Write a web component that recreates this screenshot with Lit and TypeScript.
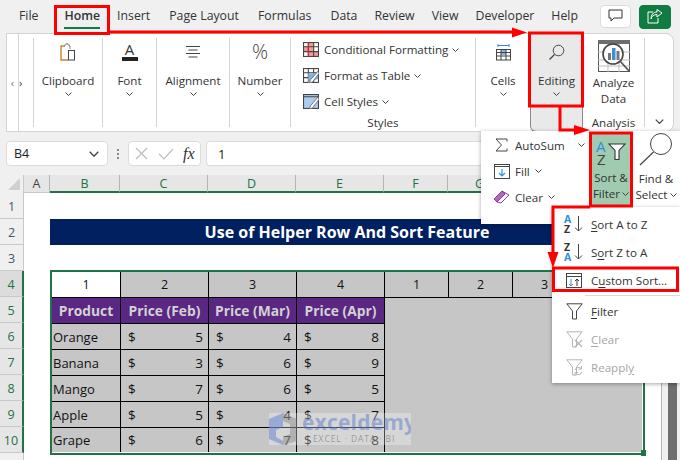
import { LitElement, html, css, svg } from "lit";
import { customElement } from "lit/decorators.js";

const chev = (w = 7, h = 4, c = "#444") => html`<svg class="chev" width=${w} height=${h} viewBox="0 0 7 4"><path d="M.5.5 3.5 3.5 6.5.5" fill="none" stroke=${c} stroke-width="1"/></svg>`;

const grid = (x: number, y: number) => svg`<g fill="none" stroke="#444" stroke-width="1"><rect x=${x + .5} y=${y + .5} width="14" height="13"/><path d="M${x + 5} ${y}v14M${x + 10} ${y}v14M${x} ${y + 4.5}h15M${x} ${y + 9}h15"/></g>`;

const icons = {
  clipboard: html`<svg width="16" height="18" viewBox="0 0 16 18"><path d="M5 3H1v14h7" fill="none" stroke="#d67f28" stroke-width="1.4"/><path d="M4.5 3.5V2h1.5V.7h2V2h1.5v1.5M10 3v3" fill="none" stroke="#8a8a8a"/><rect x="8.5" y="7.5" width="6" height="9.5" fill="#fff" stroke="#444"/></svg>`,
  align: html`<svg width="16" height="14" viewBox="0 0 16 14"><path d="M1 1.5h14M3.5 5h9M1 8.500h14M3.500 12h9" stroke="#444" fill="none"/></svg>`,
  cond: html`<svg width="16" height="15" viewBox="0 0 15 14"><rect x="5" y="0" width="5" height="9" fill="#f29b9b"/><rect x="5" y="9" width="10" height="5" fill="#f29b9b"/><rect x="0" y="4" width="5" height="5" fill="#f29b9b"/>${grid(0, 0)}<path d="M5 .5v13" stroke="#d22" /></svg>`,
  table: html`<svg width="16" height="15" viewBox="0 0 15 14">${grid(0, 0)}<path d="M5 5h9v5L6 14H5z" fill="#7fb2e5"/><path d="M14 3 7 11l-1 3 3-1 6-8z" fill="#fff" stroke="#666" stroke-width=".8"/></svg>`,
  styles: html`<svg width="16" height="15" viewBox="0 0 15 14"><rect x=".5" y=".5" width="14" height="13" fill="#a9cdf0"/><path d="M0 .5h15M0 2.500h15" stroke="#444"/><rect x=".5" y=".5" width="14" height="13" fill="none" stroke="#444"/><path d="M14 3 7 11l-1 3 3-1 6-8z" fill="#fff" stroke="#666" stroke-width=".8"/></svg>`,
  cells: html`<svg width="17" height="18" viewBox="0 0 17 18"><path d="M3 1v3M14 1v3M3 2.500h11" stroke="#2f8fdc" fill="none"/><rect x="6" y="6" width="5" height="6" fill="#7fb2e5"/><rect x="1.500" y="6.500" width="14" height="10.500" fill="none" stroke="#444"/><path d="M6 6v11M11 6v11M1 9.500h15M1 13h15" stroke="#444" fill="none"/></svg>`,
  search: html`<svg width="17" height="17" viewBox="0 0 17 17"><circle cx="10.500" cy="6.500" r="5.300" fill="none" stroke="#444"/><path d="M6.500 10.500 1.500 15.500" stroke="#444" stroke-width="1.300"/></svg>`,
  analyze: html`<svg width="32" height="33" viewBox="0 0 32 33"><rect x=".5" y=".5" width="31" height="31" fill="#fff" stroke="#555"/><rect x="0" y="0" width="32" height="4" fill="#6d6d6d"/><path d="M0 12h32M0 20h32M0 26h32M10 4v28M21 4v28" stroke="#bdbdbd"/><circle cx="15" cy="14" r="10" fill="#fff" stroke="#444" stroke-width="1.600"/><rect x="10" y="13" width="3" height="7" fill="#777"/><rect x="14" y="8" width="3.500" height="12" fill="#3f8ed6"/><rect x="18.500" y="11" width="3" height="9" fill="#777"/><path d="M22 21 31 31" stroke="#555" stroke-width="1.800"/></svg>`,
  sum: html`<svg width="13" height="14" viewBox="0 0 13 14"><path d="M12 3.500V1H1l5.500 6L1 13h11v-2.500" fill="none" stroke="#444"/></svg>`,
  fill: html`<svg width="16" height="15" viewBox="0 0 16 15"><rect x=".5" y=".5" width="15" height="14" fill="#fff" stroke="#444"/><path d="M0 2.500h16" stroke="#444"/><path d="M8 5v7M5 9l3 3 3-3" fill="none" stroke="#2f8fdc" stroke-width="1.200"/></svg>`,
  clear: html`<svg width="17" height="15" viewBox="0 0 17 15"><path d="M1 9 9 1l3 3-8 8z" fill="#b267c4" stroke="#8d3ea3"/><path d="M9 1l7 4-8 8-4-1 8-8z" fill="#fff" stroke="#8d3ea3"/></svg>`,
  az: html`<svg class="ovf" width="30" height="27" viewBox="0 0 30 27"><text x="0" y="12" class="sa">A</text><text x="1" y="25" class="sz">Z</text><path d="M13 4h16l-6 6.500v9h-4v-9z" fill="#fff" stroke="#333" stroke-width="1.100"/></svg>`,
  find: html`<svg width="36" height="36" viewBox="0 0 36 36"><circle cx="23" cy="12" r="10.500" fill="#fff" stroke="#444"/><path d="M15.500 20 2 33" stroke="#444" stroke-width="1.200"/></svg>`,
  sortaz: html`<svg class="ovf" width="20" height="20" viewBox="0 0 20 20"><text x="0" y="9" class="sma">A</text><text x="0" y="19" class="smz">Z</text><path d="M14.500 2v15M11 13.500l3.500 3.500 3.500-3.500" fill="none" stroke="#444"/></svg>`,
  sortza: html`<svg class="ovf" width="20" height="20" viewBox="0 0 20 20"><text x="0" y="9" class="smz">Z</text><text x="0" y="19" class="sma">A</text><path d="M14.500 2v15M11 13.500l3.500 3.500 3.500-3.500" fill="none" stroke="#444"/></svg>`,
  custom: html`<svg width="16" height="15" viewBox="0 0 16 15"><rect x=".5" y=".5" width="15" height="14" fill="#fff" stroke="#444"/><path d="M0 3.500h16" stroke="#444"/><path d="M5 6v7M3 11l2 2 2-2" fill="none" stroke="#2f8fdc"/><path d="M11 13V6M9 8l2-2 2 2" fill="none" stroke="#333"/></svg>`,
  filter: html`<svg width="17" height="17" viewBox="0 0 17 17"><path d="M.8.800h15.400L10.500 8v8h-4V8z" fill="#fff" stroke="#444"/></svg>`,
  fclear: html`<svg width="17" height="17" viewBox="0 0 17 17"><path d="M.8.800h15.400L10.500 8v8h-4V8z" fill="#fff" stroke="#b5b5b5"/><path d="M9 9l7 7M16 9l-7 7" stroke="#b5b5b5" stroke-width="1.300"/></svg>`,
  freapply: html`<svg width="17" height="17" viewBox="0 0 17 17"><path d="M.8.800h15.400L10.500 8v8h-4V8z" fill="#fff" stroke="#b5b5b5"/><path d="M9 11a3.500 3.500 0 0 1 6-1.500M16 13a3.500 3.500 0 0 1-6 1.500M15.500 7v3h-3M9 16.500v-3h3" fill="none" stroke="#b5b5b5"/></svg>`,
  comment: html`<svg width="15" height="14" viewBox="0 0 15 14"><path d="M1 1h13v8H6l-3 3V9H1z" fill="none" stroke="#333"/></svg>`,
  share: html`<svg width="16" height="15" viewBox="0 0 16 15"><path d="M6 3H1v11h10V9" fill="none" stroke="#fff"/><path d="M4 10c.5-3 3-4.500 6-4.500V8l5-4-5-3.500V3C6 3 4 6 4 10z" fill="#107c41" stroke="#fff"/></svg>`,
  x: html`<svg width="13" height="13" viewBox="0 0 13 13"><path d="M1 1l11 11M12 1 1 12" stroke="#bdbdbd" stroke-width="1.200"/></svg>`,
  check: html`<svg width="16" height="12" viewBox="0 0 16 12"><path d="M1 6l5 5L15 1" fill="none" stroke="#bdbdbd" stroke-width="1.200"/></svg>`,
};

const rowsData = [
  ["Orange", 5, 4, 8],
  ["Banana", 3, 6, 9],
  ["Mango", 7, 6, 5],
  ["Apple", 5, 4, 7],
  ["Grape", 6, 7, 8],
];

@customElement("app-root")
export class AppRoot extends LitElement {
  static styles = css`
    :host { display: block; width: 680px; height: 460px; position: relative; overflow: hidden; background: #f0f0f0; font-family: "Open Sans", "Noto Sans", sans-serif; font-size: 11.6px; color: #333; }
    svg { display: block; flex: none; }
    svg.ovf { overflow: visible; }
    .tabs { height: 33px; display: flex; align-items: center; padding-left: 19px; gap: 19px; font-size: 12.3px; position: relative; }
    .tab { padding-bottom: 2px; }
    .tab.tight { margin-left: -2px; }
    .tab.on { font-weight: 600; position: relative; color: #333; margin-left: 7px; margin-right: -2px; }
    .tab.on::after { content: ""; position: absolute; left: 0; right: 0; bottom: -3px; height: 2px; background: #107c41; }
    .tbtns { margin-left: auto; display: flex; gap: 8px; padding-right: 9px; }
    .tbtn { width: 31px; height: 23px; border-radius: 4px; background: #fff; border: 1px solid #dcdcdc; box-sizing: border-box; display: flex; align-items: center; justify-content: center; }
    .tbtn.g { background: #107c41; border-color: #107c41; width: 32px; height: 24px; }
    .ribbon { margin: 0 6px; height: 99px; box-sizing: border-box; background: #fff; border: 1px solid #d2d2d2; border-radius: 0 8px 8px 0; display: flex; padding-top: 4px; }
    .grp { height: 89px; box-sizing: border-box; border-right: 1px solid #d4d4d4; display: flex; flex-direction: column; align-items: center; flex: none; }
    .grp > * { flex: none; }
    .nav1 { width: 12px; height: 97px; margin-top: -4px; border-right: 1px solid #d4d4d4; justify-content: center; align-items: flex-end; padding-right: 4px; }
    .nav2 { width: 15px; height: 89px; justify-content: center; align-items: flex-start; }
    .nv { font-size: 11px; color: #777; line-height: 12px; }
    .nv2 { font-size: 11px; color: #333; line-height: 12px; margin-top: 1px; }
    .ico { height: 28px; display: flex; align-items: center; justify-content: center; }
    .lb { margin-top: 7px; line-height: 16px; white-space: nowrap; }
    .cv { margin-top: 3px; }
    .w-clip { width: 69px; } .w-font { width: 54px; } .w-align { width: 73px; } .w-num { width: 61px; }
    .w-styles { width: 185px; align-items: flex-start; padding-left: 12px; }
    .w-cells { width: 54px; border: 0; }
    .bigA { font-size: 15px; line-height: 13px; color: #333; text-align: center; width: 16px; }
    .bar { width: 16px; height: 4px; background: #222; margin-top: 1px; }
    .stack { display: flex; flex-direction: column; align-items: center; }
    .pct { font-size: 20px; font-weight: 300; color: #444; line-height: 24px; }
    .srow { height: 26px; display: flex; align-items: center; gap: 5px; white-space: nowrap; }
    .srow .chev { margin-left: -1px; margin-top: 2px; }
    .srow:first-child { margin-top: -2px; }
    .slabel { align-self: center; margin-left: -12px; margin-top: 1px; line-height: 16px; }
    .w-edit { width: 53px; height: 98px; margin-top: -4px; padding-top: 4px; background: #e9e9e9; border: 1px solid #8a8a8a; border-top: 0; border-radius: 0 0 6px 6px; }
    .w-an { width: 62px; }
    .an-ic { margin-top: 2px; }
    .an-t { text-align: center; line-height: 16px; margin-top: 2px; }
    .an-l { margin-top: 8px; line-height: 16px; white-space: nowrap; }
    .collapse { flex: 1; display: flex; justify-content: center; padding-top: 81px; }
    .fbar { height: 25px; margin-top: 9px; display: flex; padding-left: 6px; }
    .fb { background: #fff; border: 1px solid #dcdcdc; border-radius: 4px; box-sizing: border-box; display: flex; align-items: center; height: 25px; }
    .name { width: 102px; padding: 0 8px 0 7px; justify-content: space-between; font-size: 12.5px; color: #222; }
    .dots { width: 20px; display: flex; flex-direction: column; align-items: center; justify-content: center; gap: 2px; }
    .dots i { width: 2px; height: 2px; background: #8a8a8a; display: block; }
    .fxb { width: 73px; padding: 0 5px 0 6px; gap: 10px; margin-right: 5px; }
    .fx { font-family: "Liberation Serif", serif; font-style: italic; font-size: 16px; margin-left: -1px; color: #333; }
    .fv { flex: 1; padding-left: 11px; border-right: 0; border-radius: 4px 0 0 4px; font-size: 13px; color: #222; }
    .sheet { margin-top: 9px; height: 285px; display: flex; }
    .main { width: 661px; flex: none; }
    .cols { height: 18px; display: flex; background: #e6e6e6; font-size: 12.5px; }
    .ch { box-sizing: border-box; display: flex; align-items: center; justify-content: center; border-right: 1px solid #b4b4b4; color: #217346; border-bottom: 2px solid #217346; }
    .corner { width: 24px; background: #f0f0f0; display: flex; align-items: flex-end; justify-content: flex-end; padding: 0 3px 3px 0; box-sizing: border-box; border-right: 1px solid #c8c8c8; }
    .ch.a { width: 26px; color: #444; border-bottom: 1px solid #c8c8c8; }
    .c70 { width: 70px; } .c88 { width: 88px; } .c64 { width: 64px; } .c21 { width: 5px; } .cr { flex: 1; border: 0; background: #e6e6e6; border-bottom: 1px solid #c8c8c8; }
    .body { display: flex; height: 267px; }
    .rowh { width: 24px; flex: none; display: flex; flex-direction: column; font-size: 12.5px; }
    .rh { height: 26px; flex: none; box-sizing: border-box; display: flex; align-items: center; justify-content: center; border-bottom: 1px solid #c8c8c8; color: #44546a; background: #f0f0f0; border-right: 1px solid #c8c8c8; padding-top: 2px; }
    .rh.on { background: #e6e6e6; color: #217346; border-right: 2px solid #217346; }
    .rh.tall { background: #dcdcdc; }
    .rh.rest { flex: 1; border: 0; border-right: 1px solid #c8c8c8; }
    .cv2 { flex: 1; background: #fff; min-width: 0; }
    .sp { height: 26px; }
    .sp3 { height: 25px; }
    .title { height: 26px; margin-left: 26px; width: 594px; background: #002060; color: #fff; font-weight: 700; font-size: 16px; display: flex; align-items: center; justify-content: center; }
    .sel { margin-left: 26px; width: 595px; height: 185px; box-sizing: border-box; border: 2px solid #217346; background: #fff; padding: 0 1px 1px 0; position: relative; }
    .tbl { display: grid; grid-template-columns: 69px 88px 88px 88px 64px 64px 64px 1fr; grid-template-rows: repeat(6, 26px) 24px; background: #c6c6c6; font-size: 13px; color: #111; }
    .c { box-sizing: border-box; border-right: 1px solid #000; border-bottom: 1px solid #000; display: flex; align-items: center; background: #c6c6c6; padding: 0 3px 0 1px; white-space: nowrap; }
    .c.h4 { justify-content: center; font-size: 12.5px; padding: 0; }
    .c.h4.w { background: #fff; }
    .c.p { background: #5a2782; color: #d2d2d2; font-weight: 700; justify-content: center; font-size: 13.8px; padding: 0; }
    .c.m { justify-content: space-between; padding: 0 5px 0 7px; font-size: 13.5px; }
    .c.last { border-bottom: 0; }
    .c.end { border-right: 0; }
    .fill { grid-column: 5 / -1; grid-row: 2 / -1; background: #c6c6c6; }
    .handle { position: absolute; right: -3px; bottom: -3px; width: 5px; height: 6px; background: #217346; }
    .sb { flex: 1; border-left: 1px solid #b4b4b4; padding-left: 6px; background: #f0f0f0; }
    .sb i { display: block; width: 9px; height: 100%; background: #6e6e6e; }
    .wm { position: absolute; left: 269px; top: 413px; width: 142px; height: 32px; background: rgba(255,255,255,.28); pointer-events: none; overflow: hidden; z-index: 2; }
    .wm svg { position: absolute; left: 0; top: 0; }
    .wm b { position: absolute; left: 33px; top: -5px; font-size: 21px; line-height: 28px; color: rgba(72,112,200,.45); letter-spacing: .2px; }
    .wm span { position: absolute; left: 44px; top: 20px; font-size: 8.5px; line-height: 11px; letter-spacing: .9px; color: rgba(100,100,100,.55); white-space: nowrap; }
    .menu { position: absolute; background: #fff; box-shadow: 0 1px 4px rgba(0,0,0,.35); z-index: 3; }
    .m1 { left: 481px; top: 131px; width: 199px; height: 93px; display: flex; }
    .m1l { width: 109px; padding-top: 1px; }
    .mr { height: 26px; display: flex; align-items: center; padding-left: 12px; gap: 5px; white-space: nowrap; color: #333; }
    .mr .ibox { width: 17px; display: flex; justify-content: center; }
    .mr .auto { margin-left: 8px; }
    .bigb { display: flex; flex-direction: column; align-items: center; line-height: 16px; text-align: center; }
    .sf { width: 42px; height: 73px; margin-top: 2px; background: #a0cbb0; padding-top: 7px; box-sizing: border-box; }
    .sf .t { margin-top: 3px; }
    .t span { display: inline-flex; align-items: center; gap: 2px; }
    .fs { width: 48px; padding-top: 1px; }
    .fs .t { margin-top: 3px; }
    .m2 { left: 552px; top: 207px; width: 128px; height: 176px; padding-top: 3px; box-sizing: border-box; z-index: 4; }
    .mi { height: 28px; display: flex; align-items: center; padding-left: 13px; gap: 8px; white-space: nowrap; color: #333; }
    .mi .ibox { width: 18px; display: flex; justify-content: center; }
    .mi.dis { color: #a6a6a6; }
    .mi u { text-underline-offset: 2px; }
    .msep { height: 1px; background: #d8d8d8; margin: 1px 0 1px 33px; }
    .ann { position: absolute; left: 0; top: 0; z-index: 5; pointer-events: none; }
    .sa { font: 15px "Open Sans", sans-serif; fill: #2f8fdc; }
    .sz { font: 15px "Open Sans", sans-serif; fill: #444; }
    .sma { font: 700 10.5px "Open Sans", sans-serif; fill: #2f8fdc; }
    .smz { font: 700 10.5px "Open Sans", sans-serif; fill: #333; }
  `;

  private bigGroup(cls: string, icon: unknown, label: string) {
    return html`<div class="grp ${cls}"><div class="ico">${icon}</div><div class="lb">${label}</div><div class="cv">${chev()}</div></div>`;
  }

  render() {
    return html`
      <div class="tabs">
        <span class="tab">File</span><span class="tab on">Home</span><span class="tab">Insert</span><span class="tab">Page Layout</span><span class="tab">Formulas</span><span class="tab">Data</span><span class="tab tight">Review</span><span class="tab tight">View</span><span class="tab tight">Developer</span><span class="tab tight">Help</span>
        <div class="tbtns"><div class="tbtn">${icons.comment}</div><div class="tbtn g">${icons.share}</div></div>
      </div>
      <div class="ribbon">
        <div class="grp nav1"><span class="nv">‹</span></div>
        <div class="grp nav2"><span class="nv2">›</span></div>
        ${this.bigGroup("w-clip", icons.clipboard, "Clipboard")}
        ${this.bigGroup("w-font", html`<div class="stack"><div class="bigA">A</div><div class="bar"></div></div>`, "Font")}
        ${this.bigGroup("w-align", icons.align, "Alignment")}
        ${this.bigGroup("w-num", html`<div class="pct">%</div>`, "Number")}
        <div class="grp w-styles">
          <div class="srow">${icons.cond}<span>Conditional Formatting</span>${chev()}</div>
          <div class="srow">${icons.table}<span>Format as Table</span>${chev()}</div>
          <div class="srow">${icons.styles}<span>Cell Styles</span>${chev()}</div>
          <div class="slabel">Styles</div>
        </div>
        ${this.bigGroup("w-cells", icons.cells, "Cells")}
        ${this.bigGroup("w-edit", icons.search, "Editing")}
        <div class="grp w-an">
          <div class="an-ic">${icons.analyze}</div>
          <div class="an-t">Analyze<br />Data</div>
          <div class="an-l">Analysis</div>
        </div>
        <div class="collapse">${chev(9, 5)}</div>
      </div>
      <div class="fbar">
        <div class="fb name"><span>B4</span>${chev(10, 6)}</div>
        <div class="dots"><i></i><i></i><i></i></div>
        <div class="fb fxb">${icons.x}${icons.check}<span class="fx">fx</span></div>
        <div class="fb fv">1</div>
      </div>
      <div class="sheet">
        <div class="main">
          <div class="cols">
            <div class="corner"><svg width="12" height="12" viewBox="0 0 12 12"><path d="M12 0V12H0z" fill="#cfcfcf"/></svg></div>
            <div class="ch a">A</div>
            <div class="ch c70">B</div><div class="ch c88">C</div><div class="ch c88">D</div><div class="ch c88">E</div>
            <div class="ch c64">F</div><div class="ch c64">G</div><div class="ch c64">H</div><div class="ch c64">I</div><div class="ch c21"></div><div class="cr"></div>
          </div>
          <div class="body">
            <div class="rowh">
              ${[1, 2, 3].map((n) => html`<div class="rh">${n}</div>`)}
              ${[4, 5, 6, 7, 8, 9, 10].map((n) => html`<div class="rh on ${n === 4 ? "tall" : ""}">${n}</div>`)}
              <div class="rh rest"></div>
            </div>
            <div class="cv2">
              <div class="sp"></div>
              <div class="title">Use of Helper Row And Sort Feature</div>
              <div class="sp3"></div>
              <div class="sel">
                <div class="tbl">
                  <div class="c h4 w">1</div><div class="c h4">2</div><div class="c h4">3</div><div class="c h4">4</div><div class="c h4">1</div><div class="c h4">2</div><div class="c h4">3</div><div class="c h4 end">4</div>
                  <div class="c p">Product</div><div class="c p">Price (Feb)</div><div class="c p">Price (Mar)</div><div class="c p">Price (Apr)</div>
                  <div class="fill"></div>
                  ${rowsData.map((r, i) => {
                    const l = i === rowsData.length - 1 ? "last" : "";
                    return html`<div class="c ${l}">${r[0]}</div>${[r[1], r[2], r[3]].map((v) => html`<div class="c m ${l}"><span>$</span><span>${v}</span></div>`)}`;
                  })}
                </div>
                <div class="handle"></div>
              </div>
            </div>
          </div>
        </div>
        <div class="sb"><i></i></div>
      </div>
      <div class="wm">
        <svg width="32" height="32" viewBox="0 0 32 32"><path d="M0 6 14 0v14l-7 3v7l7 4 0 4L0 26z" fill="rgba(80,120,210,.45)"/><path d="M14 0l14 6v22l-14 4v-8l7-3V11l-7-3z" fill="rgba(110,110,110,.35)"/></svg>
        <b>exceldemy</b><span>EXCEL · DATA · BI</span>
      </div>
      <div class="menu m1">
        <div class="m1l">
          <div class="mr"><span class="ibox">${icons.sum}</span><span>AutoSum</span><span class="auto">${chev()}</span></div>
          <div class="mr"><span class="ibox">${icons.fill}</span><span>Fill</span>${chev()}</div>
          <div class="mr"><span class="ibox">${icons.clear}</span><span>Clear</span>${chev()}</div>
        </div>
        <div class="bigb sf">${icons.az}<div class="t">Sort &amp;<br /><span>Filter ${chev()}</span></div></div>
        <div class="bigb fs">${icons.find}<div class="t">Find &amp;<br /><span>Select ${chev()}</span></div></div>
      </div>
      <div class="menu m2">
        <div class="mi"><span class="ibox">${icons.sortaz}</span><span><u>S</u>ort A to Z</span></div>
        <div class="mi"><span class="ibox">${icons.sortza}</span><span>S<u>o</u>rt Z to A</span></div>
        <div class="mi"><span class="ibox">${icons.custom}</span><span>C<u>u</u>stom Sort...</span></div>
        <div class="msep"></div>
        <div class="mi"><span class="ibox">${icons.filter}</span><span><u>F</u>ilter</span></div>
        <div class="mi dis"><span class="ibox">${icons.fclear}</span><span><u>C</u>lear</span></div>
        <div class="mi dis"><span class="ibox">${icons.freapply}</span><span>Reappl<u>y</u></span></div>
      </div>
      <svg class="ann" width="680" height="460" viewBox="0 0 680 460">
        <g fill="none" stroke="#f00" stroke-width="3">
          <rect x="55.500" y="6.500" width="53" height="27"/>
          <path d="M109 32H514"/>
          <rect x="529.500" y="33" width="53" height="73"/>
          <path d="M560 107V130H576"/>
          <rect x="590.500" y="133" width="41" height="73"/>
          <path d="M590 207H553V254"/>
          <rect x="553.500" y="268" width="124" height="22.500"/>
        </g>
        <path d="M512 27.500 527 32.500 512 37.500zM574 125 590 130 574 135zM547.500 252H558.500L553 268z" fill="#f00"/>
      </svg>
    `;
  }
}
